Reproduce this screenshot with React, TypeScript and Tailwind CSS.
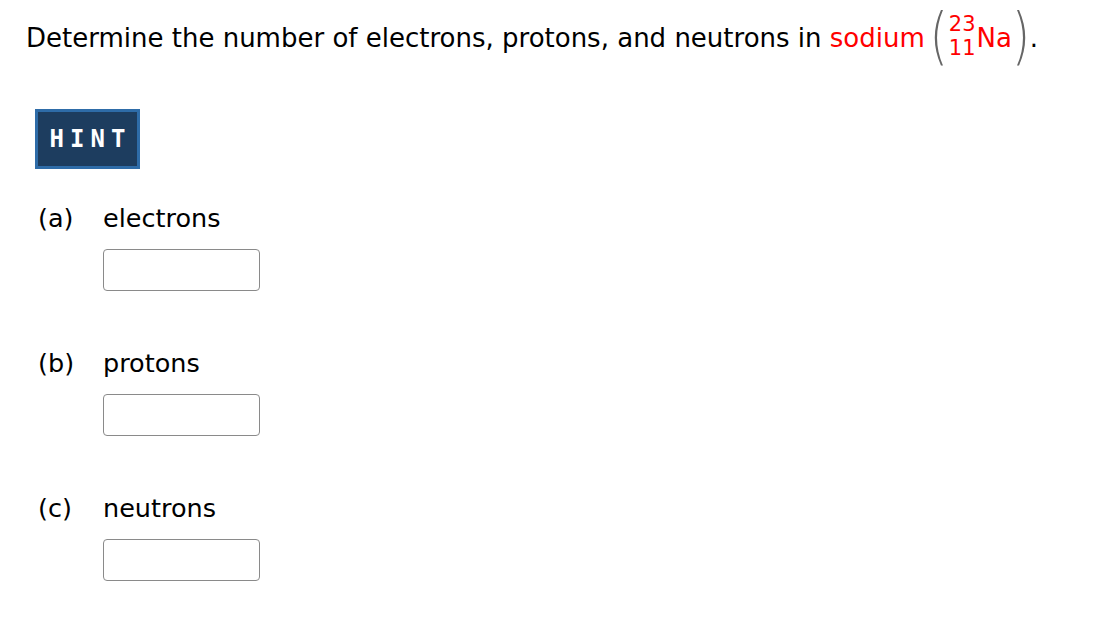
import React from 'react';

const parts = [
  { key: '(a)', label: 'electrons' },
  { key: '(b)', label: 'protons' },
  { key: '(c)', label: 'neutrons' },
];

const App: React.FC = () => {
  return (
    <div className="w-[1118px] h-[628px] bg-white text-black" style={{ fontFamily: '"DejaVu Sans", Verdana, sans-serif' }}>
      <div className="pl-[26px] pt-[6px] text-[26px] leading-[64px] flex items-center">
        <span>Determine the number of electrons, protons, and neutrons in&nbsp;</span>
        <span className="text-[#ff0000]">sodium</span>
        <span className="ml-[5px] text-[#666] text-[46px] font-extralight leading-[64px] scale-y-[1.35] -translate-y-[3px]">(</span>
        <span className="flex flex-col items-end text-[#ff0000] text-[21px] leading-[24px] ml-[1px] -translate-y-[2px]">
          <span>23</span>
          <span>11</span>
        </span>
        <span className="text-[#ff0000] ml-[1px]">Na</span>
        <span className="text-[#666] text-[46px] font-extralight leading-[64px] scale-y-[1.35] -translate-y-[3px]">)</span>
        <span>.</span>
      </div>

      <div className="ml-[35px] mt-[39px] w-[105px] h-[60px] border-[3px] border-[#2e6ca8] bg-[#1d3d5f] flex items-center justify-center">
        <span className="text-white font-bold text-[24px] tracking-[6px] pl-[6px]" style={{ fontFamily: '"DejaVu Sans Mono", monospace' }}>HINT</span>
      </div>

      <div className="mt-[33px] flex flex-col gap-[56px]">
        {parts.map((p) => (
          <div key={p.key} className="pl-[38px]">
            <div className="flex text-[25.5px] leading-[32px]">
              <span className="w-[65px]">{p.key}</span>
              <span>{p.label}</span>
            </div>
            <div className="ml-[65px] mt-[15px] w-[157px] h-[42px] border border-[#8a8a8a] rounded-[4px] bg-white" />
          </div>
        ))}
      </div>
    </div>
  );
};

export default App;
